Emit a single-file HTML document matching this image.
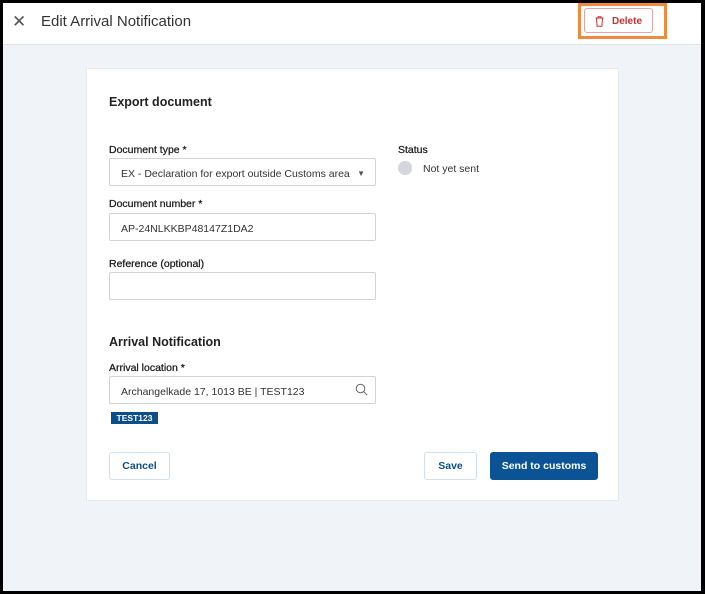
<!DOCTYPE html>
<html><head><style>
*{box-sizing:border-box;margin:0;padding:0}
body{width:705px;height:594px;background:#000;font-family:"Liberation Sans",sans-serif;position:relative;overflow:hidden}
.page{position:absolute;left:3px;top:3px;width:698px;height:588px;background:#f0f3f7}
.hdr{position:absolute;left:0;top:0;width:698px;height:42px;background:#fff;border-bottom:1px solid #e1e5ea}
.abs{position:absolute}
.card{position:absolute;left:83px;top:65px;width:533px;height:433px;background:#fff;border:1px solid #e6e9ee}
.lbl{position:absolute;font-size:10.5px;color:#1a1a1a;-webkit-text-stroke:0.25px #1a1a1a}
.inp{position:absolute;left:22px;width:267px;height:28px;border:1px solid #cfd4da;border-radius:2px;font-size:10.5px;color:#333;padding-left:11px;padding-top:2px;line-height:26px}
.btn{position:absolute;height:28px;border:1px solid #cfe0ef;border-radius:3px;font-size:10.5px;color:#0b4e8a;font-weight:600;text-align:center;line-height:27px;background:#fff}
</style></head><body>
<div class="page">
 <div class="hdr">
  <div class="abs" style="left:9px;top:9px;font-size:17px;color:#555">✕</div>
  <div class="abs" style="left:38px;top:10px;font-size:15px;color:#333">Edit Arrival Notification</div>
  <div class="abs" style="left:575px;top:0;width:89px;height:36px;border:3px solid #f08a3c"></div>
  <div class="abs" style="left:581px;top:5px;width:69px;height:25px;border:1px solid #e8a3a3;border-radius:3px;background:#fff">
   <svg class="abs" style="left:10px;top:7px" width="9" height="11" viewBox="0 0 9 11"><path d="M0.5 2h8M3 2V0.8h3V2M1.5 2l0.6 8.3h4.8L7.5 2" fill="none" stroke="#c83232" stroke-width="1"/></svg>
   <div class="abs" style="left:27px;top:7px;font-size:10px;color:#c83232;font-weight:600">Delete</div>
  </div>
 </div>
 <div class="card">
  <div class="abs" style="left:22px;top:26px;font-size:12.5px;font-weight:600;color:#222">Export document</div>
  <div class="lbl" style="left:22px;top:75px">Document type *</div>
  <div class="inp" style="top:89px">EX - Declaration for export outside Customs area<span style="position:absolute;right:10px;top:2px;font-size:8px;color:#555">▼</span></div>
  <div class="lbl" style="left:311px;top:75px">Status</div>
  <div class="abs" style="left:311px;top:92px;width:14px;height:14px;border-radius:50%;background:#d3d6db"></div>
  <div class="abs" style="left:336px;top:94px;font-size:10.5px;color:#333">Not yet sent</div>
  <div class="lbl" style="left:22px;top:129px">Document number *</div>
  <div class="inp" style="top:144px">AP-24NLKKBP48147Z1DA2</div>
  <div class="lbl" style="left:22px;top:189px">Reference (optional)</div>
  <div class="inp" style="top:203px"></div>
  <div class="abs" style="left:22px;top:266px;font-size:12.5px;font-weight:600;color:#222">Arrival Notification</div>
  <div class="lbl" style="left:22px;top:293px">Arrival location *</div>
  <div class="inp" style="top:307px">Archangelkade 17, 1013 BE | TEST123
   <svg style="position:absolute;right:7px;top:6px" width="13" height="13" viewBox="0 0 13 13"><circle cx="5.5" cy="5.5" r="4.3" fill="none" stroke="#666" stroke-width="1"/><path d="M8.6 8.6l3.6 3.6" stroke="#666" stroke-width="1"/></svg></div>
  <div class="abs" style="left:24px;top:343px;width:47px;height:12px;background:#0b4e8a;color:#fff;font-size:8.5px;font-weight:600;text-align:center;line-height:12px">TEST123</div>
  <div class="btn" style="left:22px;top:383px;width:61px">Cancel</div>
  <div class="btn" style="left:337px;top:383px;width:53px">Save</div>
  <div class="btn" style="left:403px;top:383px;width:108px;background:#0b5394;border-color:#0b5394;color:#fff">Send to customs</div>
 </div>
</div>
</body></html>
